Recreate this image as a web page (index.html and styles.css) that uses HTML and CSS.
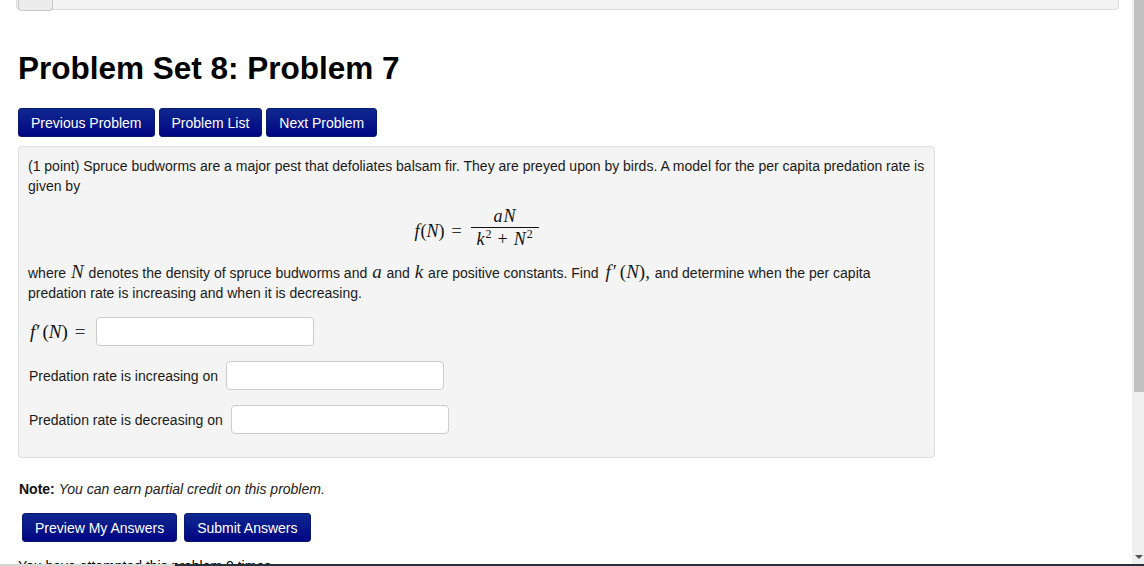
FILE: index.html
```html
<!DOCTYPE html>
<html>
<head>
<meta charset="utf-8">
<link rel="stylesheet" href="styles.css">
</head>
<body>
<div class="viewport">
  <div class="page">
    <div class="topbar"><div class="topbar-btn"></div></div>
    <h1 class="title">Problem Set 8: Problem 7</h1>
    <div class="nav">
      <span class="btn">Previous Problem</span>
      <span class="btn">Problem List</span>
      <span class="btn">Next Problem</span>
    </div>
    <div class="problem">
      <p class="text">(1 point) Spruce budworms are a major pest that defoliates balsam fir. They are preyed upon by birds. A model for the per capita predation rate is given by</p>
      <div class="display">
        <span class="lhs"><i>f</i>(<i>N</i>)<span class="eq">=</span></span>
        <span class="frac">
          <span class="num"><i>a</i><i>N</i></span>
          <span class="den"><i>k</i><sup>2</sup><span class="plus">+</span><i>N</i><sup>2</sup></span>
        </span>
      </div>
      <p class="text">where <i class="m">N</i> denotes the density of spruce budworms and <i class="m">a</i> and <i class="m">k</i> are positive constants. Find <span class="m fp"><i>f</i><span class="prime">′</span>(<i>N</i>),</span> and determine when the per capita predation rate is increasing and when it is decreasing.</p>
      <div class="answers">
        <div class="row"><span class="mlabel"><i>f</i><span class="prime">′</span>(<i>N</i>)<span class="eq">=</span></span><span class="input"></span></div>
        <div class="row"><span>Predation rate is increasing on</span><span class="input"></span></div>
        <div class="row"><span>Predation rate is decreasing on</span><span class="input"></span></div>
      </div>
    </div>
    <p class="note"><b>Note:</b> <i>You can earn partial credit on this problem.</i></p>
    <div class="submit">
      <span class="btn">Preview My Answers</span>
      <span class="btn">Submit Answers</span>
    </div>
    <p class="attempts">You have attempted this problem 0 times.</p>
  </div>
  <div class="scrollbar">
    <div class="thumb"></div>
    <div class="arrow"></div>
  </div>
</div>
<div class="bottomstrip"><div class="strip-light"></div><div class="strip-dark"></div></div>
</body>
</html>
```
FILE: styles.css
```css
html, body {
  margin: 0;
  padding: 0;
  height: 566px;
  overflow: hidden;
  background: #fff;
  font-family: "Liberation Sans", Arial, sans-serif;
  font-size: 14px;
  color: #000;
}
.viewport {
  display: flex;
  height: 566px;
}
.page {
  flex: 1;
  height: 566px;
  overflow: hidden;
  padding: 0 15px 0 18px;
}
.topbar {
  height: 9px;
  margin: 0 -2px 0 -2px;
  background: #f3f3f3;
  border: 1px solid #dcdcdc;
  border-top: none;
  border-radius: 0 0 4px 4px;
  display: flex;
}
.topbar-btn {
  width: 33px;
  height: 10px;
  margin-left: 1px;
  background: #ececec;
  border: 1px solid #c8c8c8;
  border-top: none;
  border-radius: 0 0 4px 4px;
}
.title {
  margin: 40px 0 0 0;
  font-size: 31.5px;
  font-weight: bold;
  line-height: 36px;
}
.nav {
  margin-top: 22px;
  display: flex;
  gap: 4px;
}
.btn {
  display: inline-flex;
  align-items: center;
  height: 29px;
  box-sizing: border-box;
  padding: 0 12px;
  color: #fff;
  font-size: 14px;
  background: linear-gradient(to bottom, #10288f, #000582);
  border: 1px solid #0a1a70;
  border-radius: 3px;
}
.problem {
  margin-top: 9px;
  width: 917px;
  box-sizing: border-box;
  padding: 9px;
  background: #f4f4f4;
  border: 1px solid #dedede;
  border-radius: 4px;
  color: #1a1a1a;
}
.text {
  margin: 0;
  line-height: 20px;
}
.m {
  font-family: "Liberation Serif", "Times New Roman", serif;
  font-size: 19px;
  line-height: 16px;
  margin: 0 1px;
}
.m i, i.m {
  font-style: italic;
}
.fp {
  margin: 0 1px 0 3px;
}
.prime {
  margin: 0 2px 0 1px;
}
.fp .prime {
  margin: 0 3px 0 2px;
}
.display {
  margin: 10px 0 14px 0;
  display: flex;
  justify-content: center;
  align-items: center;
  font-family: "Liberation Serif", "Times New Roman", serif;
  font-size: 18px;
  color: #111;
}
.lhs {
  line-height: 20px;
  margin-top: 6px;
}
.lhs i:first-child {
  margin-right: 1px;
}
.eq {
  margin: 0 8px 0 7px;
  color: #333;
}
.plus {
  margin: 0 6px;
}
.frac {
  display: inline-flex;
  flex-direction: column;
  align-items: center;
  margin-left: 1px;
}
.num {
  line-height: 20px;
  padding: 0 3px 1px 3px;
  border-bottom: 1px solid #111;
  min-width: 62px;
  text-align: center;
}
.num i + i {
  margin-left: 1px;
}
.den {
  line-height: 20px;
  padding: 1px 2px 0 2px;
}
.den sup {
  font-size: 12px;
  vertical-align: 7px;
  line-height: 0;
  font-style: normal;
  margin-left: 1px;
}
.answers {
  display: flex;
  flex-direction: column;
  gap: 15px;
  padding: 14px 0 14px 0;
}
.row {
  display: flex;
  align-items: center;
  gap: 8px;
  padding-left: 1px;
}
.mlabel {
  font-family: "Liberation Serif", "Times New Roman", serif;
  font-size: 19px;
  color: #111;
  margin-right: 2px;
}
.mlabel i:first-child {
  margin-left: 1px;
}
.mlabel .eq {
  margin: 0 0 0 7px;
}
.input {
  display: block;
  width: 218px;
  height: 29px;
  box-sizing: border-box;
  background: #fff;
  border: 1px solid #cccccc;
  border-radius: 4px;
}
.note {
  margin: 21px 0 0 1px;
  line-height: 20px;
  font-size: 14px;
  color: #111;
}
.note i {
  color: #222;
}
.submit {
  margin: 14px 0 0 4px;
  display: flex;
  gap: 7px;
}
.attempts {
  margin: 14px 0 0 0;
  line-height: 20px;
}
.scrollbar {
  width: 12px;
  height: 566px;
  background: #f0f0f0;
  display: flex;
  flex-direction: column;
  align-items: flex-end;
}
.thumb {
  width: 10px;
  height: 392px;
  background: #c1c1c1;
}
.arrow {
  margin-top: auto;
  margin-bottom: 7px;
  margin-right: 1px;
  width: 0;
  height: 0;
  border-left: 4px solid transparent;
  border-right: 4px solid transparent;
  border-top: 4px solid #505050;
}
.bottomstrip {
  position: fixed;
  left: 0;
  right: 0;
  bottom: 0;
  height: 2px;
  display: flex;
}
.strip-light {
  width: 175px;
  background: #d6d6d6;
}
.strip-dark {
  flex: 1;
  background: #25323a;
}
```
